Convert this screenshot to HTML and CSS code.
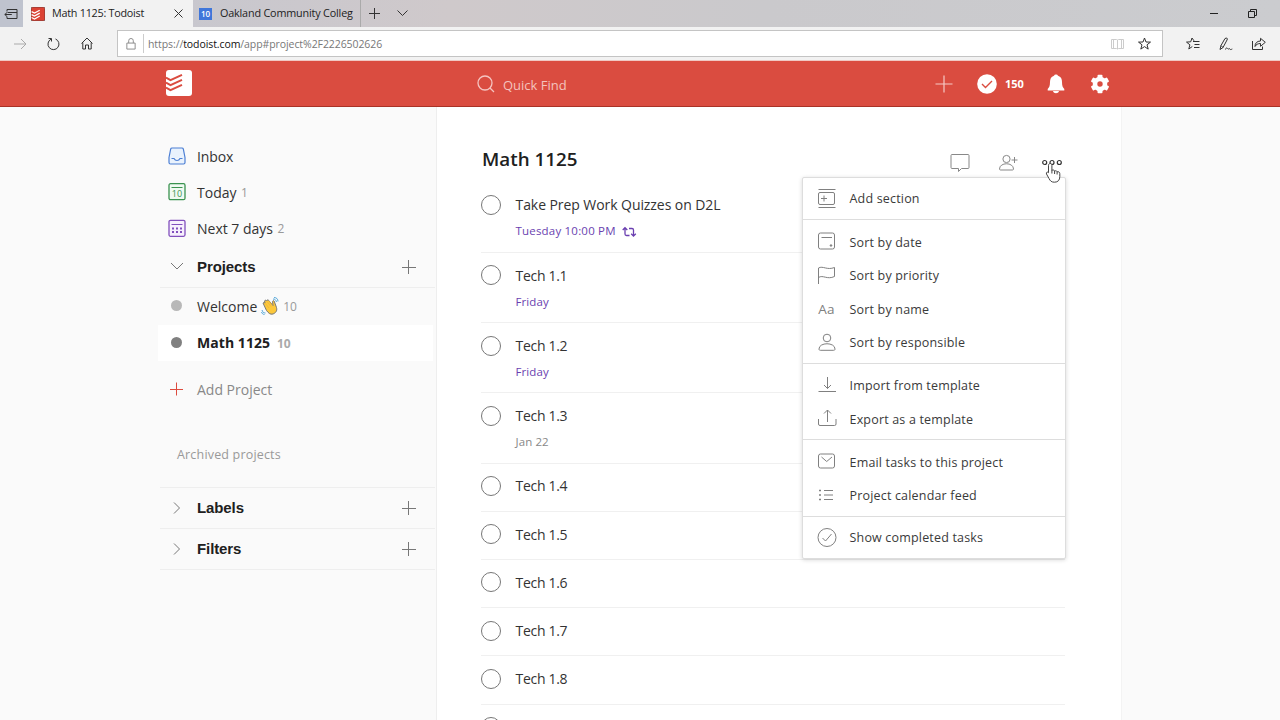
FILE: index.html
```html
<!DOCTYPE html>
<html lang="en">
<head>
<meta charset="utf-8">
<title>Math 1125: Todoist</title>
<link rel="stylesheet" href="styles.css">
</head>
<body>
<div class="tabstrip">
  <div class="set-aside"><svg width="14" height="12" viewBox="0 0 14 12"><path d="M3 3.500V1.500h10v9H3V8.500M3.500 4.500h9.500M0.800 6.500h7M3 4.500l-2.200 2L3 8.500"/></svg></div>
  <div class="tab active">
    <svg class="fav" width="14" height="14" viewBox="0 0 24 24"><rect width="24" height="24" rx="3" fill="#dc4234"/><path d="M1 8l5 2.500 9-5M1 13l5 2.500 9-5M1 18l5 2.500 9-5" stroke="#fff" stroke-width="2.200"/></svg>
    <span class="tab-name first">Math 1125: Todoist</span>
    <svg class="close" width="9" height="9" viewBox="0 0 9 9"><path d="M0.500 0.500l8 8M8.500 0.500l-8 8"/></svg>
  </div>
  <div class="tab second"><span class="calfav">10</span><span class="tab-name long">Oakland Community Colleg</span></div>
  <svg class="newtab" width="11" height="11" viewBox="0 0 11 11"><path d="M5.500 0v11M0 5.500h11"/></svg>
  <svg class="tabmenu" width="11" height="7" viewBox="0 0 11 7"><path d="M0.500 0.500l5 5 5-5"/></svg>
  <div class="window-buttons">
    <svg width="9" height="9" viewBox="0 0 9 9"><path d="M0 4.500h8"/></svg>
    <svg width="9" height="9" viewBox="0 0 9 9"><path d="M0.500 2.500h6v6h-6zM2.500 2.500v-2h6v6h-2"/></svg>
  </div>
</div>
<div class="toolbar">
  <svg class="fwd" width="13" height="12" viewBox="0 0 13 12"><path d="M0 6h12M7 1l5 5-5 5"/></svg>
  <svg class="reload" width="13" height="14" viewBox="0 0 13 14"><path d="M4 2.200A5.500 5.500 0 1 0 8.500 2M1.500 1.500h3v3"/></svg>
  <svg class="home" width="12" height="13" viewBox="0 0 12 13"><path d="M0.500 6.500L6 1l5.500 5.500M1.800 5.500v6.500h2.700V8h3v4h2.700V5.500"/></svg>
  <div class="address">
    <svg class="lock" width="10" height="12" viewBox="0 0 10 13"><path d="M0.500 5.500h9v6.500h-9zM2.500 5.500V3a2.500 2.500 0 0 1 5 0v2.500"/></svg>
    <span class="bar"></span>
    <span class="url">https://<b>todoist.com</b>/app#project%2F2226502626</span>
    <svg class="book" width="13" height="12" viewBox="0 0 13 12"><path d="M.500 1.500h5l1 .500 1-.500h5v9h-5l-1 .500-1-.500h-5zM6.500 2v9M2.500 1.500v9M10.500 1.500v9"/></svg>
    <svg class="star" width="13" height="13" viewBox="0 0 13 13"><path d="M6.500 1l1.500 4 4.500.100L9 7.800l1.200 4.300L6.500 9.600 2.800 12.100 4 7.800.500 5.100 5 5z"/></svg>
  </div>
  <div class="tools">
    <svg width="14" height="13" viewBox="0 0 14 13"><path d="M8 3.800L6 1 4.700 4.800.500 5.100 3.900 7.800 2.800 12 6.300 9.500M7 4.500h6.500M8.500 7.500h5M8 10.500h5.500"/></svg>
    <svg width="14" height="14" viewBox="0 0 14 14"><path d="M1 12.500L2 8.500 6 1.500c2-1 3 0 2 1.500L4 10.500 1 12.500zM2 8.500l2 2M6.500 12.500c1-3 2-1 2.500-.500s1.500-1 2 0 1 .500 2.300 0"/></svg>
    <svg width="14" height="13" viewBox="0 0 14 13"><path d="M.500 4v8.500h10V9.500M3 9.500C3 6 5 4.200 8.500 4V1.300l4.800 4-4.800 4V6.500C6 6.500 4 7.500 3 9.500z"/></svg>
  </div>
</div>
<header class="appbar">
  <svg class="logo" width="26" height="26" viewBox="0 0 26 26"><rect width="26" height="26" rx="3" fill="#fff"/><path d="M0 7.500l4.500 2.600L16 4.800M0 12.500l4.500 2.600L16 9.800M0 17.500l4.500 2.600L16 14.800" stroke="#da4c40" stroke-width="2"/></svg>
  <svg class="search" width="18" height="18" viewBox="0 0 18 18"><circle cx="8" cy="8" r="7"/><path d="M13 13l4 4"/></svg>
  <span class="quick">Quick Find</span>
  <svg class="plus" width="18" height="18" viewBox="0 0 18 18"><path d="M9 .500v17M.500 9h17"/></svg>
  <svg class="karma" width="20" height="20" viewBox="0 0 20 20"><circle cx="10" cy="10" r="9.800" fill="#fff"/><path d="M5 10l3.500 3.500L15 7" stroke="#da4c40" stroke-width="1.400"/></svg>
  <span class="score">150</span>
  <svg class="bell" width="18" height="20" viewBox="0 0 18 20"><path d="M9 .500a2 2 0 0 1 2 1.200c3 .800 4 3.300 4 6.300 0 4 .800 5.500 2.300 7v1.500H.700V15C2.200 13.500 3 12 3 8c0-3 1-5.500 4-6.300A2 2 0 0 1 9 .500zM6 17h6c-.500 3-5.500 3-6 0z" fill="#fff"/></svg>
  <svg class="gear" width="20" height="20" viewBox="0 0 20 20"><circle cx="10" cy="10" r="5" fill="none" stroke="#fff" stroke-width="4.600"/><g fill="#fff"><rect id="cog" x="7.500" y=".700" width="5" height="4" rx="1"/><use href="#cog" transform="rotate(60 10 10)"/><use href="#cog" transform="rotate(120 10 10)"/><use href="#cog" transform="rotate(180 10 10)"/><use href="#cog" transform="rotate(240 10 10)"/><use href="#cog" transform="rotate(300 10 10)"/></g></svg>
</header>
<div class="page">
  <nav class="sidebar">
    <div class="nav"><svg class="ic" viewBox="0 0 18 18"><path d="M4 1h10q1 0 1.300 1l1.700 8.500V15.500a1.500 1.500 0 0 1-1.500 1.500h-13a1.500 1.500 0 0 1-1.500-1.500v-5L2.700 2Q3 1 4 1zM3.500 11.500H6q1 2 3 2t3-2h2.500" fill="#e9f2fd" stroke="#4c7fd4" stroke-width="1.200"/></svg><span class="inbox">Inbox</span></div>
    <div class="nav"><svg class="ic" viewBox="0 0 18 18"><rect x="1" y=".700" width="16" height="16" rx="1.500" fill="#f0faf2" stroke="#3b9350" stroke-width="1.300"/><path d="M3.500 4.500h11" stroke="#3b9350"/><text x="9" y="14" text-anchor="middle" class="day">10</text></svg><span>Today</span><i>1</i></div>
    <div class="nav"><svg class="ic" viewBox="0 0 18 18"><rect x="1" y="1.300" width="16" height="16" rx="1.500" fill="#f7f0fd" stroke="#8250bd" stroke-width="1.300"/><path d="M3.500 5.500h11" stroke="#8250bd"/><path d="M4 9.500h10.500M4 13h10.500" stroke="#8250bd" stroke-width="1.800" stroke-dasharray="2 2"/></svg><span>Next 7 days</span><i>2</i></div>
    <div class="group"><svg class="ic" viewBox="0 0 18 18"><path d="M3 6l6 6 6-6"/></svg><span class="gname">Projects</span><svg class="add" viewBox="0 0 14 14"><path d="M6.500 0v14M0 7.500h14"/></svg></div>
    <div class="proj"><span class="dot"></span><span>Welcome</span>
      <svg class="wave" width="18" height="18" viewBox="0 0 18 18"><path d="M2 6c1-1 2 0 2 0L3.500 4c.700-1.400 1.700-.700 2 0l.500-.800c1-.700 1.700 0 2 .600l4 4.700-.500-4c.500-1.400 1.700-1 2 .500l2 5.500c1 3.500-1 5.500-3.500 6.500-3 .800-4.500-1-6.500-3.500z" fill="#fcc83b"/><path d="M4 6l4 5M6 4.500l4 5M8 4l3.500 4" stroke="#eeb038" stroke-width=".7"/><path d="M12 2c2 0 3 1 3.500 3M13 .500c2.500 0 4 1.500 4 4M1 13c.500 2 1.500 3 3.500 3M.500 15c.500 1.500 1.500 2.500 3 2.500" stroke="#54a6d8"/></svg><i>10</i></div>
    <div class="proj current"><span class="dot dark"></span><span>Math 1125</span><i>10</i></div>
    <div class="addproj"><svg class="ic" viewBox="0 0 18 18"><path d="M8.500 2.500v13M2 9.500h13" stroke="#dd4b3e"/></svg><span>Add Project</span></div>
    <div class="archived">Archived projects</div>
    <div class="group closed"><svg class="ic" viewBox="0 0 18 18"><path d="M6 3.500l5.500 5.500L6 14.500"/></svg><span class="gname">Labels</span><svg class="add" viewBox="0 0 14 14"><path d="M6.500 0v14M0 7.500h14"/></svg></div>
    <div class="group closed last"><svg class="ic" viewBox="0 0 18 18"><path d="M6 3.500l5.500 5.500L6 14.500"/></svg><span class="gname">Filters</span><svg class="add" viewBox="0 0 14 14"><path d="M6.500 0v14M0 7.500h14"/></svg></div>
  </nav>
  <main class="content">
    <div class="heading"><h1>Math 1125</h1>
      <div class="actions">
        <svg width="20" height="20" viewBox="0 0 20 20"><path d="M2 1.500h16a1 1 0 0 1 1 1v12a1 1 0 0 1-1 1h-6.500l-3 3v-3H2a1 1 0 0 1-1-1v-12a1 1 0 0 1 1-1z"/></svg>
        <svg width="20" height="20" viewBox="0 0 20 20"><circle cx="8.500" cy="6" r="3.600"/><path d="M1.500 16c0-7 14-7 14 0 0 .700-.500 1-1 1h-12c-.700 0-1-.500-1-1zM16.500 4v6M13.500 7h6"/></svg>
        <svg class="more" width="20" height="20" viewBox="0 0 20 20"><circle cx="2.700" cy="9.500" r="2"/><circle cx="10" cy="9.500" r="2"/><circle cx="17.300" cy="9.500" r="2"/></svg>
      </div>
    </div>
    <ul class="tasks">
      <li class="tall"><span class="check"></span><div><p>Take Prep Work Quizzes on D2L</p><small><span class="due">Tuesday 10:00 PM</span><svg width="15" height="12" viewBox="0 0 15 12"><path d="M.700 4L3 1.700 5.300 4M3 2v6q0 1.500 1.500 1.500H7.500M7 2.500h3q1.500 0 1.500 1.500v6M9.200 7.800l2.300 2.300 2.300-2.300"/></svg></small></div></li>
      <li class="tall"><span class="check"></span><div><p class="short">Tech 1.1</p><small>Friday</small></div></li>
      <li class="tall"><span class="check"></span><div><p class="short">Tech 1.2</p><small>Friday</small></div></li>
      <li class="tall"><span class="check"></span><div><p class="short">Tech 1.3</p><small class="later">Jan 22</small></div></li>
      <li><span class="check"></span><div><p class="short">Tech 1.4</p></div></li>
      <li><span class="check"></span><div><p class="short">Tech 1.5</p></div></li>
      <li><span class="check"></span><div><p class="short">Tech 1.6</p></div></li>
      <li><span class="check"></span><div><p class="short">Tech 1.7</p></div></li>
      <li><span class="check"></span><div><p class="short">Tech 1.8</p></div></li>
      <li><span class="check"></span><div></div></li>
    </ul>
    <div class="menu">
      <section class="top"><div class="item"><svg viewBox="0 0 20 20"><path d="M1.500.500h17M1.500 18.500h17"/><rect x="1.500" y="3.500" width="16" height="12" rx="1.500"/><path d="M7 6.500v6M4 9.500h6"/></svg>Add section</div></section>
      <section>
        <div class="item"><svg viewBox="0 0 20 20"><rect x="1.500" y="1" width="16" height="16" rx="2"/><path d="M4.500 5.500h10.500"/><circle cx="14" cy="13.500" r=".8" fill="#777"/></svg>Sort by date</div>
        <div class="item"><svg viewBox="0 0 20 20"><path d="M1.500 18V2C6-.500 10 4.500 17.500 1.500v9C10 14 6 8.500 1.500 11.500"/></svg>Sort by priority</div>
        <div class="item"><span class="aa">Aa</span>Sort by name</div>
        <div class="item"><svg viewBox="0 0 20 20"><circle cx="10" cy="5" r="3.800"/><path d="M2 16c0-7 16-7 16 0 0 1-.500 1.300-1.300 1.300H3.300C2.500 17.300 2 17 2 16z"/></svg>Sort by responsible</div>
      </section>
      <section>
        <div class="item"><svg viewBox="0 0 20 20"><path d="M10.500 1v11.500M7 9l3.500 3.500L14 9M1.500 15.500h17.500"/></svg>Import from template</div>
        <div class="item"><svg viewBox="0 0 20 20"><path d="M10.500 13V1M7 4.500L10.500 1 14 4.500M1.500 10v5q0 1.500 1.500 1.500h14.500q1.500 0 1.500-1.500v-5"/></svg>Export as a template</div>
      </section>
      <section class="mail">
        <div class="item"><svg viewBox="0 0 20 20"><rect x="1.500" y="2" width="16" height="14" rx="2"/><path d="M4.500 5l5.200 4.500L15 5"/></svg>Email tasks to this project</div>
        <div class="item"><svg viewBox="0 0 20 20"><path d="M2 4.500h2M2 9h2M2 13.500h2" stroke-width="1.500"/><path d="M7 4.500h9M7 9h9M7 13.500h9"/></svg>Project calendar feed</div>
      </section>
      <section class="bottom"><div class="item"><svg viewBox="0 0 20 20"><circle cx="10" cy="9.500" r="9"/><path d="M5.500 10l3 3 6-7"/></svg>Show completed tasks</div></section>
    </div>
    <svg class="cursor" width="18" height="22" viewBox="0 0 18 22"><path d="M5.200 1.500c1.200 0 1.700.800 1.700 1.800v5c1-.700 2.300-.300 2.700.700 1-.600 2.200-.100 2.500.800 1.500-.500 2.700.400 2.700 1.800v3c0 3.500-1.800 5.600-5.300 5.600-3 0-4.300-1.200-5.500-3.700L1.500 12c-.700-1.700 1-2.600 2-1.300V3.300c0-1 .600-1.800 1.700-1.800z" fill="#fff" stroke="#444"/><path d="M6.900 8v3.500M9.600 9v3M12.100 10v2.500" stroke="#444"/></svg>
  </main>
</div>
</body>
</html>
```
FILE: styles.css
```css
* { box-sizing: border-box; }
body { margin: 0; width: 1280px; height: 720px; overflow: hidden; background: #fafafa; font-family: "Open Sans", "Noto Sans", sans-serif; color: #333; }
svg { display: block; flex: none; fill: none; stroke-width: 1; }

.tabstrip { height: 27px; display: flex; align-items: center; background: linear-gradient(90deg, #c3c6d0, #cfc9cb 35%, #cac9cc 60%, #cbcccf); stroke: #333; }
.set-aside { width: 23px; height: 27px; display: flex; align-items: center; padding-left: 4px; background: #bfc3ce; }
.tab { height: 27px; display: flex; align-items: center; }
.tab.active { width: 170px; background: #f2f2f2; padding-left: 8px; }
.tab-name { font-size: 10.8px; line-height: 14px; white-space: nowrap; margin: 0 0 2px 8px; color: #222; }
.tab-name.first { width: 92px; margin-left: 7px; letter-spacing: -.25px; }
.tab-name.long { letter-spacing: -.17px; }
.close { margin-left: 30px; }
.tab.second { width: 168px; border-right: 1px solid #aaa; padding-left: 6px; }
.calfav { width: 13px; height: 12px; background: #3f76da; color: #fff; font-size: 8px; font-weight: 600; line-height: 12px; text-align: center; }
.newtab { margin-left: 8px; }
.tabmenu { margin-left: 17px; }
.window-buttons { margin-left: auto; display: flex; gap: 29px; padding-right: 23px; stroke: #222; }

.toolbar { height: 34px; display: flex; align-items: center; background: #f2f2f2; stroke: #333; border-bottom: 1px solid #f0c9c4; }
.fwd { margin-left: 14px; stroke: #aaa; }
.reload { margin-left: 20px; }
.home { margin-left: 21px; }
.address { margin-left: 24px; width: 1046px; height: 27px; border: 1px solid #c4c4c4; background: #fff; display: flex; align-items: center; padding-left: 8px; }
.lock { stroke: #888; }
.bar { width: 1px; height: 19px; background: #ccc; margin: 0 4px 0 7px; }
.url { font-size: 10.500px; letter-spacing: -.08px; color: #777; width: 240px; white-space: nowrap; }
.url b { font-weight: 400; color: #111; }
.book { margin-left: auto; stroke: #ccc; }
.star { margin: 0 11px 0 14px; }
.tools { display: flex; gap: 19px; margin-left: 23px; }

.appbar { height: 46px; display: flex; align-items: center; background: #da4c40; border-bottom: 1px solid #a93226; color: #fff; }
.logo { margin: 0 0 1px 166px; }
.search { margin-left: 285px; stroke: #f5c4c0; stroke-width: 1.300; }
.quick { margin-left: 8px; font-size: 13px; width: 70px; color: #f4c3be; padding-top: 2px; white-space: nowrap; }
.plus { margin-left: 362px; stroke: #f5c9c5; stroke-width: 1.200; }
.karma { margin-left: 24px; }
.score { margin-left: 8px; width: 24px; font-size: 11px; font-weight: 700; }
.bell { margin-left: 18px; }
.gear { margin-left: 25px; }

.page { display: flex; height: 613px; }
.sidebar { width: 437px; padding: 31px 1px 0 158px; border-right: 1px solid #eee; font-size: 14px; stroke: #777; }
.nav, .proj, .addproj { height: 36px; display: flex; align-items: center; padding-left: 10px; color: #333; white-space: nowrap; }
.ic { width: 18px; height: 18px; margin-right: 11px; }
.sidebar span { stroke: none; }
.sidebar i { font-style: normal; font-size: 12px; letter-spacing: -.2px; color: #999; margin-left: 4.500px; padding-top: 1px; }
.inbox { letter-spacing: -.1px; }
.day { font-size: 9px; fill: #3b9350; stroke: none; }
.group { height: 42px; display: flex; align-items: center; margin-left: 2px; padding: 0 0 1px 8px; border-bottom: 1px solid #eee; }
.gname { font: bold 15px "Liberation Sans", sans-serif; color: #202020; letter-spacing: -.1px; }
.add { width: 14px; height: 14px; margin: 1px 19px 0 auto; }
.proj { height: 37px; padding-bottom: 1px; }
.dot { width: 11px; height: 11px; border-radius: 50%; background: #b8b8b8; margin: 0 15px 1px 3px; flex: none; }
.dot.dark { background: #808080; }
.wave { margin-left: 4px; }
.proj .wave + i { margin-left: 4px; }
.current { background: #fff; height: 36px; margin-right: 2px; font-weight: 700; color: #202020; }
.current span + i { color: #aaa; margin-left: 7px; }
.current span { letter-spacing: .05px; }
.addproj { margin-top: 10px; color: #888; }
.archived { height: 80px; margin-left: 19px; padding-top: 39px; line-height: 17px; font-size: 12.500px; letter-spacing: .18px; color: #999; }
.closed { height: 41px; border-top: 1px solid #eee; border-bottom: 0; }
.closed.last { height: 42px; border-bottom: 1px solid #eee; }

.content { position: relative; width: 685px; padding: 28px 56px 0 44px; background: #fff; border-right: 1px solid #f3f3f3; }
.heading { display: flex; justify-content: space-between; height: 47px; padding-left: 1px; }
h1 { margin: 0; font-size: 18.800px; line-height: 49px; font-weight: 600; color: #202020; }
.actions { display: flex; gap: 28px; padding-top: 18px; margin-right: 2px; stroke: #888; }
.actions svg:last-child { margin-left: -4px; margin-right: 1px; }
.more { stroke: #333; stroke-width: 1.200; }
.tasks { list-style: none; margin: 0; padding: .6px 0 0; }
.tasks li { height: 48.200px; display: flex; border-bottom: 1px solid #f0f0f0; padding-top: 12.800px; }
.tasks .tall { height: 70.250px; }
.check { width: 20px; height: 20px; border: 1px solid #777; border-radius: 50%; margin: -.3px 14.500px 0 0; flex: none; }
.tasks li p { margin: 0; line-height: 20px; font-size: 14px; letter-spacing: -.07px; color: #333; white-space: nowrap; }
.tasks li .short { letter-spacing: -.3px; }
small { display: flex; align-items: center; gap: 6px; height: 16px; margin-top: 7.500px; font-size: 11.500px; color: #6a3fb0; stroke: #6a3fb0; white-space: nowrap; letter-spacing: .1px; }
small .due { letter-spacing: .2px; }
small svg { stroke-width: 1.300; margin-top: 2px; }
.later { color: #888; }

.menu { position: absolute; left: 365px; top: 70px; width: 264px; height: 382px; background: #fff; border: 1px solid #ddd; border-radius: 2px; box-shadow: 0 1px 4px rgba(0,0,0,.16); stroke: #808080; font-size: 12.500px; letter-spacing: .18px; color: #3a3a3a; }
.menu section { padding: 5.500px 0 3px; border-bottom: 1px solid #ddd; }
.menu .top { padding: 4px 0 3.500px; }
.menu .bottom { border: 0; padding-top: 4.500px; }
.item { height: 33.500px; display: flex; align-items: center; padding-left: 13.500px; white-space: nowrap; }
.item svg { width: 20px; height: 20px; margin-right: 13px; }
.aa { width: 20px; margin-right: 13px; text-align: center; font-size: 13.500px; line-height: 18px; color: #808080; }
.cursor { position: absolute; left: 608px; top: 55px; }
```
